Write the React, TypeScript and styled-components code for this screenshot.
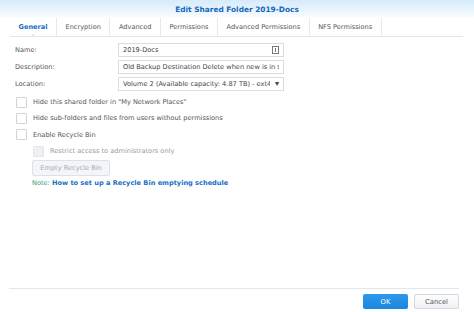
import styled, { createGlobalStyle } from 'styled-components';

const GlobalStyle = createGlobalStyle`
  html, body {
    margin: 0;
    padding: 0;
    background: #fff;
  }
  body {
    font-family: 'DejaVu Sans', Verdana, sans-serif;
  }
`;

const tabs = [
  'General',
  'Encryption',
  'Advanced',
  'Permissions',
  'Advanced Permissions',
  'NFS Permissions',
];

const options = [
  { label: 'Hide this shared folder in "My Network Places"' },
  { label: 'Hide sub-folders and files from users without permissions' },
  { label: 'Enable Recycle Bin' },
];

const App = () => {
  return (
    <Window>
      <GlobalStyle />
      <TitleBar>Edit Shared Folder 2019-Docs</TitleBar>
      <TabBar>
        {tabs.map((t, i) => (
          <Tab key={t} active={i === 0}>
            {t}
          </Tab>
        ))}
      </TabBar>
      <Body>
        <FieldRow>
          <Label>Name:</Label>
          <Field>
            <FieldText>2019-Docs</FieldText>
            <svg width="7" height="8" viewBox="0 0 7 8">
              <rect x="0.5" y="0.5" width="6" height="7" fill="none" stroke="#777" />
              <line x1="3.5" y1="2" x2="3.5" y2="6" stroke="#777" />
            </svg>
          </Field>
        </FieldRow>
        <FieldRow>
          <Label>Description:</Label>
          <Field>
            <FieldText>Old Backup Destination Delete when new is in service</FieldText>
          </Field>
        </FieldRow>
        <FieldRow>
          <Label>Location:</Label>
          <Field>
            <FieldText>Volume 2 (Available capacity: 4.87 TB) - ext4</FieldText>
            <Arrow>▾</Arrow>
          </Field>
        </FieldRow>

        <Checks>
          {options.map((o) => (
            <CheckRow key={o.label}>
              <Box />
              <CheckLabel>{o.label}</CheckLabel>
            </CheckRow>
          ))}
        </Checks>

        <Sub>
          <CheckRow>
            <Box disabled />
            <CheckLabel disabled>Restrict access to administrators only</CheckLabel>
          </CheckRow>
          <GhostButton>Empty Recycle Bin</GhostButton>
          <Note>
            <NoteTag>Note:</NoteTag> <NoteLink>How to set up a Recycle Bin emptying schedule</NoteLink>
          </Note>
        </Sub>
      </Body>
      <Footer>
        <OkButton>OK</OkButton>
        <CancelButton>Cancel</CancelButton>
      </Footer>
    </Window>
  );
};

const Window = styled.div`
  width: 474px;
  height: 312px;
  display: flex;
  flex-direction: column;
  background: #fff;
  overflow: hidden;
`;

const TitleBar = styled.div`
  height: 17px;
  display: flex;
  align-items: center;
  justify-content: center;
  background: linear-gradient(to bottom, #d6ebfa 0%, #eaf5fd 60%, #fbfdff 100%);
  color: #1467b8;
  font-size: 7.4px;
  font-weight: bold;
  padding-top: 1px;
`;

const TabBar = styled.div`
  display: flex;
  margin: 0 11px 0 10px;
  height: 18px;
  border-bottom: 1px solid #e3e6ea;
`;

const Tab = styled.div<{ active?: boolean }>`
  position: relative;
  display: flex;
  align-items: center;
  padding: 0 8.5px;
  font-size: 6.6px;
  color: ${(p) => (p.active ? '#1a6fc4' : '#555')};
  font-weight: ${(p) => (p.active ? 'bold' : 'normal')};
  & + & {
    border-left: 1px solid #e6e8eb;
  }
  &:last-child {
    border-right: 1px solid #e6e8eb;
  }
  ${(p) =>
    p.active &&
    `
    &::after {
      content: '';
      position: absolute;
      left: 50%;
      bottom: -1px;
      margin-left: -3px;
      border-left: 3px solid transparent;
      border-right: 3px solid transparent;
      border-bottom: 3px solid #e3e6ea;
    }
  `}
`;

const Body = styled.div`
  flex: 1;
  display: flex;
  flex-direction: column;
  padding: 4px 15px 0 15px;
`;

const FieldRow = styled.div`
  display: flex;
  align-items: center;
  height: 17px;
`;

const Label = styled.div`
  width: 103px;
  font-size: 6.6px;
  color: #555;
`;

const Field = styled.div`
  width: 166px;
  height: 14px;
  box-sizing: border-box;
  border: 1px solid #d9dde2;
  display: flex;
  align-items: center;
  padding: 0 4px 0 4px;
  gap: 5px;
  overflow: hidden;
`;

const FieldText = styled.div`
  flex: 1;
  min-width: 0;
  white-space: nowrap;
  overflow: hidden;
  font-size: 6.6px;
  color: #444;
`;

const Arrow = styled.span`
  font-size: 8px;
  color: #444;
  line-height: 1;
`;

const Checks = styled.div`
  display: flex;
  flex-direction: column;
  margin-top: 2px;
`;

const CheckRow = styled.div`
  display: flex;
  align-items: center;
  height: 16.3px;
`;

const Box = styled.div<{ disabled?: boolean }>`
  width: 9px;
  height: 9px;
  margin-left: 1px;
  border: 1px solid ${(p) => (p.disabled ? '#e3e6ea' : '#cfd4d9')};
  background: ${(p) => (p.disabled ? '#eef0f3' : '#fff')};
  border-radius: 1px;
  margin-right: 6px;
`;

const CheckLabel = styled.div<{ disabled?: boolean }>`
  font-size: 6.6px;
  color: ${(p) => (p.disabled ? '#9a9a9a' : '#555')};
`;

const Sub = styled.div`
  display: flex;
  flex-direction: column;
  align-items: flex-start;
  padding-left: 17px;
`;

const GhostButton = styled.div`
  margin-top: 1px;
  width: 78px;
  height: 16px;
  box-sizing: border-box;
  border: 1px solid #dde2e8;
  border-radius: 2px;
  background: #f3f5f8;
  display: flex;
  align-items: center;
  justify-content: center;
  font-size: 6.6px;
  color: #a5a9ad;
`;

const Note = styled.div`
  margin-top: 3px;
  font-size: 6.6px;
`;

const NoteTag = styled.span`
  color: #3e9a73;
`;

const NoteLink = styled.span`
  color: #1a6fc4;
  font-weight: bold;
`;

const Footer = styled.div`
  display: flex;
  justify-content: flex-end;
  gap: 6px;
  margin: 0 15px 0 9px;
  padding: 5px 0 3px;
  border-top: 1px solid #e3e6ea;
`;

const OkButton = styled.div`
  width: 45px;
  height: 15px;
  border-radius: 2px;
  background: linear-gradient(to bottom, #2d99ec, #1b86de);
  color: #fff;
  font-size: 6.8px;
  display: flex;
  align-items: center;
  justify-content: center;
`;

const CancelButton = styled.div`
  width: 45px;
  height: 15px;
  box-sizing: border-box;
  border: 1px solid #d3d8de;
  border-radius: 2px;
  background: linear-gradient(to bottom, #fdfdfe, #eff2f5);
  color: #555;
  font-size: 6.8px;
  display: flex;
  align-items: center;
  justify-content: center;
`;

export default App;
